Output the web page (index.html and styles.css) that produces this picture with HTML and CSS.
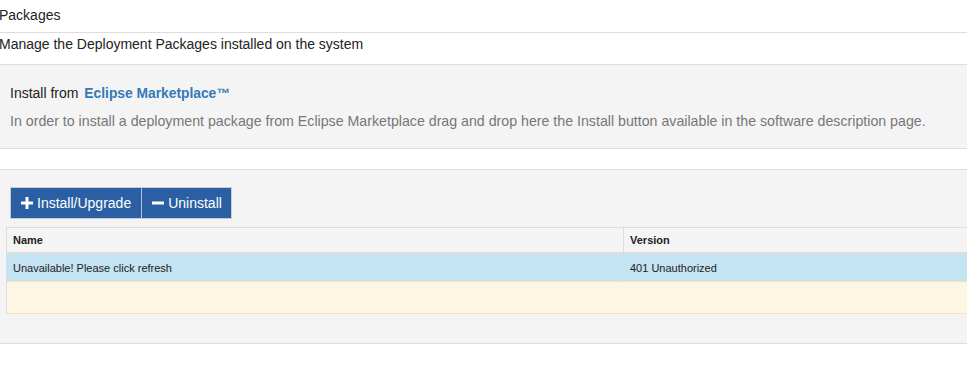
FILE: index.html
```html
<!DOCTYPE html>
<html>
<head>
<meta charset="utf-8">
<link rel="stylesheet" href="styles.css">
</head>
<body>
<div class="header">
  <div class="title">Packages</div>
</div>
<div class="subtitle">Manage the Deployment Packages installed on the system</div>
<div class="panel market">
  <div class="market-title">Install from <a class="market-link">Eclipse Marketplace™</a></div>
  <div class="market-desc">In order to install a deployment package from Eclipse Marketplace drag and drop here the Install button available in the software description page.</div>
</div>
<div class="gap"></div>
<div class="panel packages">
  <div class="toolbar">
    <button class="btn"><svg class="ico" viewBox="0 0 12 12"><path d="M4.5 0h3v4.5H12v3H7.5V12h-3V7.5H0v-3h4.5z" fill="#fff"/></svg>Install/Upgrade</button><button class="btn"><svg class="ico" viewBox="0 0 12 12"><rect x="0" y="4.5" width="12" height="3" fill="#fff"/></svg>Uninstall</button>
  </div>
  <div class="table">
    <div class="row head">
      <div class="cell name">Name</div>
      <div class="cell version">Version</div>
    </div>
    <div class="row info">
      <div class="cell name">Unavailable! Please click refresh</div>
      <div class="cell version">401 Unauthorized</div>
    </div>
    <div class="row warn"></div>
  </div>
</div>
</body>
</html>
```
FILE: styles.css
```css
html, body {
  margin: 0;
  padding: 0;
  background: #fff;
  font-family: "Liberation Sans", Arial, sans-serif;
  color: #333;
  overflow: hidden;
}
.header {
  height: 32px;
  border-bottom: 1px solid #ddd;
  display: flex;
  align-items: center;
}
.title {
  font-size: 14px;
  margin-left: -1px;
  color: #222;
  padding-bottom: 2px;
}
.subtitle {
  height: 31px;
  font-size: 14px;
  line-height: 22px;
  color: #222;
  margin-left: -1px;
}
.panel {
  background: #f4f4f4;
  border-top: 1px solid #ddd;
  border-bottom: 1px solid #ddd;
}
.market {
  padding-left: 10px;
  box-sizing: border-box;
  height: 85px;
  padding-top: 19px;
}
.market-title {
  font-size: 14px;
  color: #222;
  line-height: 18px;
}
.market-link {
  color: #337ab7;
  font-weight: bold;
  font-size: 13.8px;
  margin-left: 2px;
}
.market-desc {
  margin-top: 9px;
  font-size: 14.2px;
  color: #777;
  line-height: 18px;
}
.gap {
  height: 20px;
}
.packages {
  height: 175px;
  box-sizing: border-box;
  padding-top: 17px;
}
.toolbar {
  display: flex;
  margin-left: 10px;
}
.btn {
  display: flex;
  align-items: center;
  gap: 4px;
  height: 32px;
  padding: 0 10px;
  background: #2a5fa4;
  color: #fff;
  border: 1px solid #c8ccd2;
  font-family: "Liberation Sans", Arial, sans-serif;
  font-size: 14px;
  margin: 0;
}
.btn + .btn {
  border-left: 1px solid #b7c3d3;
  margin-left: -1px;
  padding-right: 9px;
}
.ico {
  width: 12px;
  height: 12px;
}
.table {
  margin: 8px 0 0 6px;
  width: 1000px;
  border-left: 1px solid #ddd;
  border-top: 1px solid #ddd;
  font-size: 11px;
  color: #222;
}
.row {
  display: flex;
}
.cell {
  padding: 0 6px;
  display: flex;
  align-items: center;
  box-sizing: border-box;
}
.cell.name {
  width: 617px;
  border-right: 1px solid #ddd;
}
.cell.version {
  flex: 1;
}
.head {
  height: 24px;
  border-bottom: 2px solid #ddd;
  font-weight: bold;
  background: #f4f4f4;
}
.info {
  height: 27px;
  background: #c4e3f3;
  border-bottom: 1px solid #f5e3bd;
}
.info .cell.name {
  border-right-color: #d3e3ee;
}
.warn {
  height: 31px;
  background: #fdf6e3;
  border-bottom: 1px solid #f5e3bd;
}
```
